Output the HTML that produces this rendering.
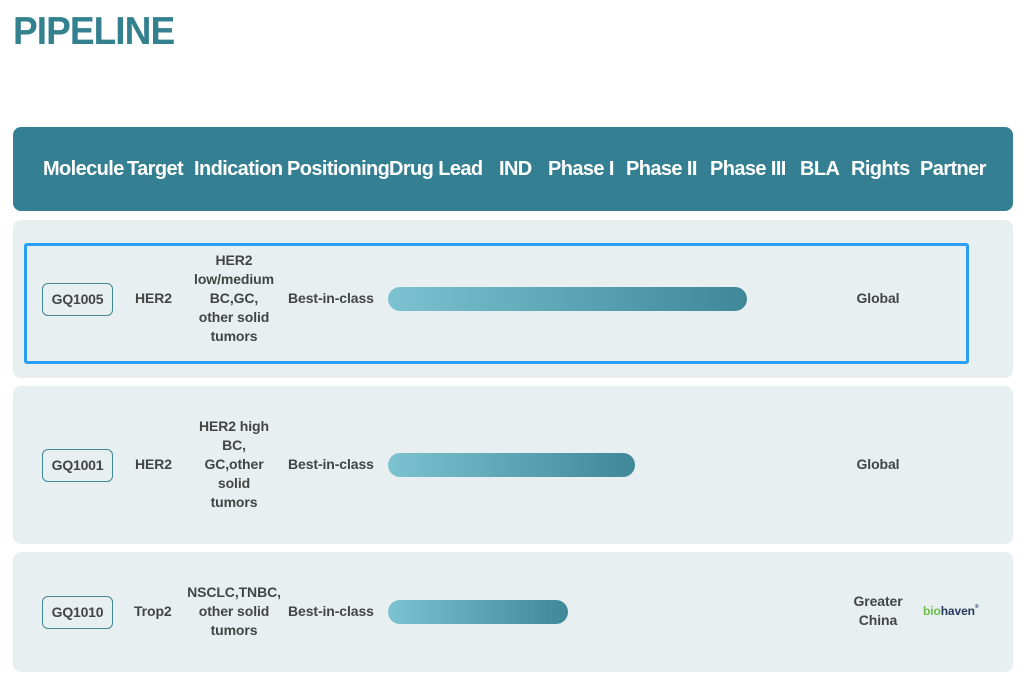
<!DOCTYPE html>
<html><head><meta charset="utf-8"><style>
*{margin:0;padding:0;box-sizing:border-box}
body{width:1033px;height:677px;background:#fff;position:relative;overflow:hidden;font-family:"Liberation Sans",sans-serif}
.t{position:absolute;left:13px;top:10px;font-size:39px;font-weight:bold;color:#33808f;letter-spacing:-1px;transform:scaleX(0.95);transform-origin:left}
.hd{position:absolute;left:13px;top:127px;width:1000px;height:84px;background:#347f91;border-radius:8px}
.h{position:absolute;top:157px;color:#fff;font-weight:bold;font-size:20px;letter-spacing:-0.6px;white-space:nowrap;line-height:24px}
.row{position:absolute;left:13px;width:1000px;background:#e7eff1;border-radius:8px}
.sel{position:absolute;left:24px;top:243px;width:945px;height:121px;border:3px solid #2a9df4;border-radius:3px}
.c{position:absolute;font-size:14px;font-weight:bold;color:#444;letter-spacing:-0.1px;line-height:19px;text-align:center;white-space:nowrap}
.gq{position:absolute;left:42px;width:71px;height:33px;border:1px solid #3f8797;border-radius:6px;font-size:14px;font-weight:bold;color:#444;text-align:center;line-height:31px;letter-spacing:-0.2px}
.bar{position:absolute;left:388px;height:24px;border-radius:12px;background:linear-gradient(90deg,#7cc2d1,#3f8898)}
</style></head><body>
<div class="t">PIPELINE</div>
<div class="hd"></div>
<div class="h" style="left:43px">Molecule</div>
<div class="h" style="left:127px">Target</div>
<div class="h" style="left:194px">Indication</div>
<div class="h" style="left:287px">Positioning</div>
<div class="h" style="left:389px">Drug Lead</div>
<div class="h" style="left:499px">IND</div>
<div class="h" style="left:548px">Phase I</div>
<div class="h" style="left:626px">Phase II</div>
<div class="h" style="left:710px">Phase III</div>
<div class="h" style="left:800px">BLA</div>
<div class="h" style="left:851px">Rights</div>
<div class="h" style="left:920px">Partner</div>

<div class="row" style="top:220px;height:158px"></div>
<div class="row" style="top:386px;height:158px"></div>
<div class="row" style="top:552px;height:120px"></div>
<div class="sel"></div>

<div class="gq" style="top:283px">GQ1005</div>
<div class="c" style="left:135px;top:289px">HER2</div>
<div class="c" style="left:184px;width:100px;top:251px">HER2<br>low/medium<br>BC,GC,<br>other solid<br>tumors</div>
<div class="c" style="left:288px;top:289px">Best-in-class</div>
<div class="bar" style="top:287px;width:359px"></div>
<div class="c" style="left:838px;width:80px;top:289px">Global</div>

<div class="gq" style="top:449px">GQ1001</div>
<div class="c" style="left:135px;top:455px">HER2</div>
<div class="c" style="left:184px;width:100px;top:417px">HER2 high<br>BC,<br>GC,other<br>solid<br>tumors</div>
<div class="c" style="left:288px;top:455px">Best-in-class</div>
<div class="bar" style="top:453px;width:247px"></div>
<div class="c" style="left:838px;width:80px;top:455px">Global</div>

<div class="gq" style="top:596px">GQ1010</div>
<div class="c" style="left:134px;top:602px">Trop2</div>
<div class="c" style="left:184px;width:100px;top:583px">NSCLC,TNBC,<br>other solid<br>tumors</div>
<div class="c" style="left:288px;top:602px">Best-in-class</div>
<div class="bar" style="top:600px;width:180px"></div>
<div class="c" style="left:838px;width:80px;top:592px">Greater<br>China</div>
<div style="position:absolute;left:923px;top:604px;font-size:12px;font-weight:bold;letter-spacing:-0.1px;white-space:nowrap"><span style="color:#6cbd45">bio</span><span style="color:#253a5c">haven</span><span style="color:#253a5c;font-size:5px;vertical-align:top">®</span></div>
</body></html>
